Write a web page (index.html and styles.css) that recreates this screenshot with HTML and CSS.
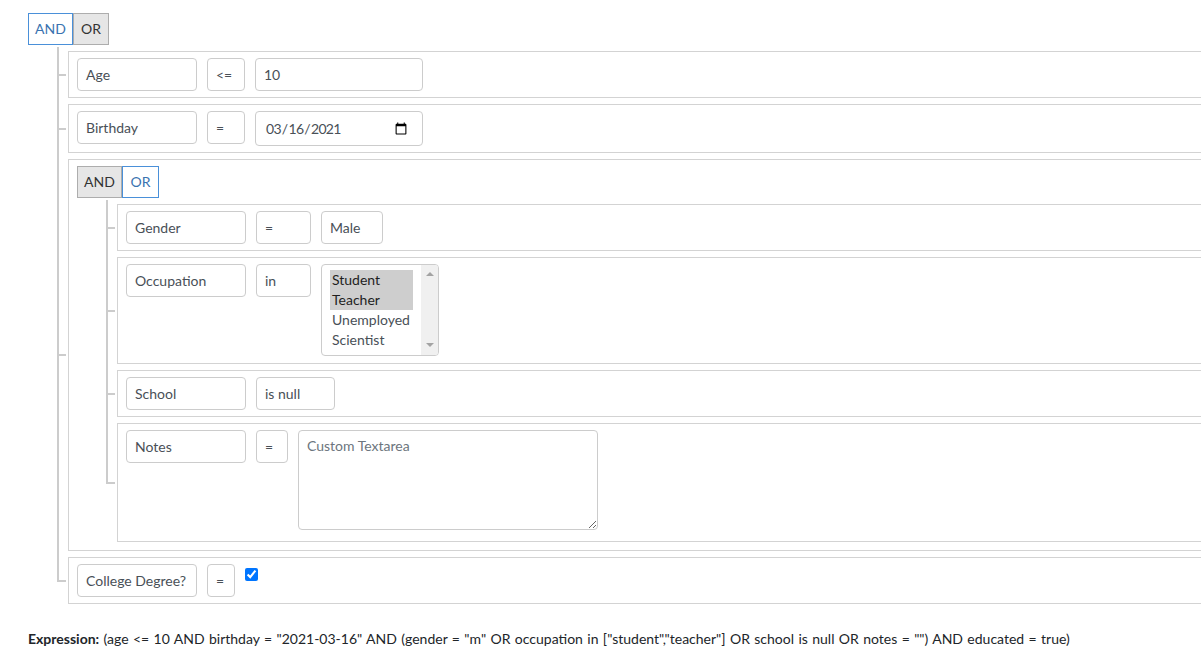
FILE: index.html
```html
<!DOCTYPE html>
<html lang="en">
<head>
<meta charset="utf-8">
<title>Query Builder</title>
<link rel="stylesheet" href="styles.css">
</head>
<body>
<main class="page">
  <div class="group">
    <div class="conj">
      <button class="conj-btn conj-and is-active">AND</button><button class="conj-btn conj-or">OR</button>
    </div>
    <ul class="children">
      <li class="node">
        <div class="rule">
          <div class="ctl field">Age</div>
          <div class="ctl op w38">&lt;=</div>
          <div class="ctl val w168">10</div>
        </div>
      </li>
      <li class="node">
        <div class="rule">
          <div class="ctl field">Birthday</div>
          <div class="ctl op w38">=</div>
          <input class="date-input" type="date" value="2021-03-16">
        </div>
      </li>
      <li class="node">
        <div class="group group-nested">
          <div class="conj">
            <button class="conj-btn conj-and">AND</button><button class="conj-btn conj-or is-active">OR</button>
          </div>
          <ul class="children">
            <li class="node">
              <div class="rule">
                <div class="ctl field">Gender</div>
                <div class="ctl op w55">=</div>
                <div class="ctl val w62">Male</div>
              </div>
            </li>
            <li class="node">
              <div class="rule">
                <div class="ctl field">Occupation</div>
                <div class="ctl op w55">in</div>
                <div class="listbox" role="listbox" aria-multiselectable="true">
                  <ul class="listbox-options">
                    <li class="opt is-selected" role="option" aria-selected="true">Student</li>
                    <li class="opt is-selected" role="option" aria-selected="true">Teacher</li>
                    <li class="opt" role="option">Unemployed</li>
                    <li class="opt" role="option">Scientist</li>
                  </ul>
                  <div class="listbox-scroll">
                    <span class="arrow arrow-up"></span>
                    <span class="arrow arrow-down"></span>
                  </div>
                </div>
              </div>
            </li>
            <li class="node">
              <div class="rule">
                <div class="ctl field">School</div>
                <div class="ctl op w79">is null</div>
              </div>
            </li>
            <li class="node">
              <div class="rule">
                <div class="ctl field">Notes</div>
                <div class="ctl op w32">=</div>
                <textarea class="notes" placeholder="Custom Textarea"></textarea>
              </div>
            </li>
          </ul>
        </div>
      </li>
      <li class="node">
        <div class="rule">
          <div class="ctl field">College Degree?</div>
          <div class="ctl op w28">=</div>
          <input class="check" type="checkbox" checked>
        </div>
      </li>
    </ul>
  </div>
  <p class="expression"><b>Expression:</b> (age &lt;= 10 AND birthday = "2021-03-16" AND (gender = "m" OR occupation in ["student","teacher"] OR school is null OR notes = "") AND educated = true)</p>
</main>
</body>
</html>
```

FILE: styles.css
```css
html {
  overflow: hidden;
}

body {
  margin: 0;
  background: #fff;
  color: #212529;
  font-family: Lato, "Open Sans", sans-serif;
  font-size: 14px;
}

.page {
  width: 1260px;
  padding: 13px 0 0 28px;
}

.conj {
  display: flex;
}

.conj-btn {
  box-sizing: border-box;
  margin: 0;
  height: 32px;
  padding: 0;
  border: 1px solid #adadad;
  border-radius: 0;
  background: #e6e6e6;
  color: #333;
  font: inherit;
  line-height: 30px;
  text-align: center;
}

.conj-and { width: 45px; }
.conj-or { width: 36px; }
.group-nested .conj-or { width: 37px; }

.conj-btn.is-active {
  background: #fff;
  border-color: #4a90d9;
  color: #3a73b0;
}

.children {
  list-style: none;
  margin: 0;
  padding: 0 0 0 40px;
}

.node {
  position: relative;
  margin-top: 6px;
}

.node::before {
  content: "";
  position: absolute;
  left: -11px;
  top: -6px;
  bottom: 0;
  width: 2px;
  background: #ccc;
}

.node:first-child::before {
  top: -4px;
}

.node:last-child::before {
  bottom: auto;
  height: calc(50% + 7px);
}

.node::after {
  content: "";
  position: absolute;
  left: -9px;
  top: calc(50% - 1px);
  width: 7px;
  height: 2px;
  background: #ccc;
}

.rule {
  display: flex;
  align-items: flex-start;
  gap: 10px;
  border: 1px solid #d3d3d3;
  padding: 6px 8px;
}

.group-nested {
  border: 1px solid #d3d3d3;
  padding: 6px 8px 8px;
}

.ctl {
  box-sizing: border-box;
  height: 33px;
  border: 1px solid #ccc;
  border-radius: 4px;
  padding: 0 8px;
  line-height: 31px;
  color: #495057;
  white-space: nowrap;
}

.field { width: 120px; }
.w28 { width: 28px; }
.w32 { width: 32px; }
.w38 { width: 38px; }
.w55 { width: 55px; }
.w62 { width: 62px; }
.w79 { width: 79px; }
.w168 { width: 168px; }

.date-input {
  box-sizing: border-box;
  width: 168px;
  height: 35px;
  margin: 0;
  border: 1px solid #ccc;
  border-radius: 4px;
  padding: 0 12px 0 9px;
  color: #495057;
  font: inherit;
  letter-spacing: -0.7px;
}

.listbox {
  box-sizing: border-box;
  display: flex;
  width: 118px;
  height: 92px;
  margin-bottom: 1px;
  border: 1px solid #ccc;
  border-radius: 4px;
  overflow: hidden;
  color: #495057;
}

.listbox-options {
  flex: 1;
  margin: 0;
  padding: 5px 8px;
  list-style: none;
}

.opt {
  padding: 0 2px;
  line-height: 20px;
  white-space: nowrap;
}

.opt.is-selected {
  background: #cecece;
  color: #1e1e1e;
}

.listbox-scroll {
  width: 17px;
  background: #f0f0f0;
  display: flex;
  flex-direction: column;
  justify-content: space-between;
  align-items: center;
  padding: 7px 0 8px;
}

.arrow {
  width: 0;
  height: 0;
  border-left: 4px solid transparent;
  border-right: 4px solid transparent;
}

.arrow-up {
  border-bottom: 4px solid #a3a3a3;
}

.arrow-down {
  border-top: 4px solid #a3a3a3;
}

.notes {
  box-sizing: border-box;
  width: 300px;
  height: 100px;
  margin: 0 0 5px;
  border: 1px solid #ccc;
  border-radius: 4px;
  padding: 6px 8px;
  color: #495057;
  font: inherit;
}

.notes::placeholder {
  color: #6c757d;
}

.check {
  width: 13px;
  height: 13px;
  margin: 4px 0 0;
}

.expression {
  margin: 25px 0 0;
  line-height: 20px;
  word-spacing: 0.8px;
}
```
